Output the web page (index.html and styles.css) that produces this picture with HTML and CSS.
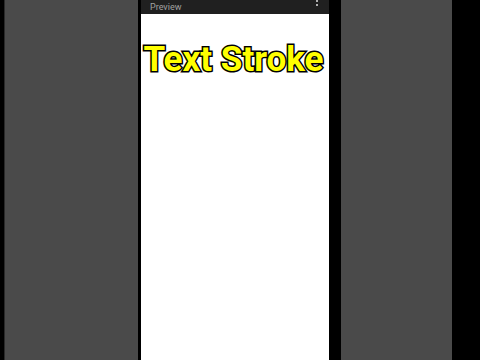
FILE: index.html
```html
<!DOCTYPE html>
<html>
<head>
<meta charset="utf-8">
<link rel="stylesheet" href="styles.css">
</head>
<body>
<div class="stage">
  <div class="bar-left"></div>
  <div class="side side-left"></div>
  <div class="phone">
    <div class="screen">
      <div class="topbar">
        <span class="title">Preview</span>
        <span class="dots"><i></i><i></i></span>
      </div>
      <div class="content">
        <div class="stroke-text">Text Stroke</div>
      </div>
    </div>
  </div>
  <div class="side side-right"></div>
  <div class="bar-right"></div>
</div>
</body>
</html>
```
FILE: styles.css
```css
html, body {
  margin: 0;
  padding: 0;
  background: #000;
}
.stage {
  width: 480px;
  height: 360px;
  display: flex;
  overflow: hidden;
}
.bar-left {
  width: 4px;
  background: #000;
  border-right: 1px solid #2a2a2a;
}
.side {
  background: #4a4a4a;
}
.side-left {
  width: 133px;
}
.side-right {
  width: 111px;
}
.bar-right {
  width: 28px;
  background: #000;
}
.phone {
  width: 203px;
  background: #000;
  padding-left: 3px;
  padding-right: 12px;
  box-sizing: border-box;
  display: flex;
}
.screen {
  flex: 1;
  background: #fff;
  display: flex;
  flex-direction: column;
}
.topbar {
  height: 14px;
  background: #202020;
  display: flex;
  align-items: center;
  justify-content: space-between;
  padding: 0 9px 0 9px;
  position: relative;
}
.title {
  font-family: Roboto, "Liberation Sans", sans-serif;
  font-size: 9px;
  color: #a0a0a0;
  line-height: 14px;
}
.dots {
  position: absolute;
  right: 11px;
  top: 0;
  display: flex;
  flex-direction: column;
  gap: 2px;
}
.dots i {
  display: block;
  width: 2px;
  height: 2px;
  border-radius: 50%;
  background: #e0e0e0;
}
.content {
  flex: 1;
  display: flex;
  justify-content: center;
  padding-top: 26px;
}
.stroke-text {
  font-family: Roboto, "Liberation Sans", sans-serif;
  font-weight: 700;
  font-size: 35px;
  line-height: 40px;
  color: #ffff00;
  -webkit-text-stroke: 3px #000;
  paint-order: stroke fill;
  white-space: nowrap;
  margin-left: -3px;
}
```
